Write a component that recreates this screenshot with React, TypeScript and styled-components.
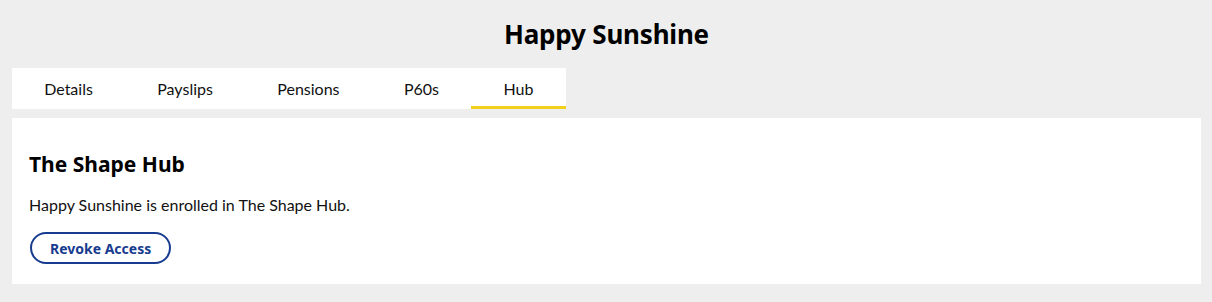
import React, { useState } from 'react';
import styled, { createGlobalStyle } from 'styled-components';

const GlobalStyle = createGlobalStyle`
  html, body {
    margin: 0;
    padding: 0;
    background: #eeeeee;
    font-family: Lato, "Liberation Sans", sans-serif;
    color: #111;
  }
`;

const Page = styled.div`
  padding: 0 11px 18px 12px;
`;

const Title = styled.h1`
  margin: 0;
  padding-top: 16px;
  height: 68px;
  box-sizing: border-box;
  text-align: center;
  font-family: "Noto Sans", "Open Sans", sans-serif;
  font-weight: 700;
  font-size: 26px;
  line-height: 36px;
  letter-spacing: -0.2px;
  color: #000;
`;

const TabBar = styled.nav`
  display: inline-flex;
  background: #fff;
  height: 41px;
  vertical-align: top;
`;

const Tab = styled.button<{ $active?: boolean }>`
  border: none;
  background: none;
  padding: 3px 32.2px 0;
  font-family: Lato, "Liberation Sans", sans-serif;
  font-size: 16px;
  color: #111;
  cursor: pointer;
  border-bottom: 3px solid ${(p) => (p.$active ? '#f2cf1c' : 'transparent')};
`;

const Card = styled.section`
  margin-top: 9px;
  background: #fff;
  padding: 20px 17px 17px;
  height: 166px;
  box-sizing: border-box;
`;

const CardTitle = styled.h2`
  margin: 0;
  font-family: "Noto Sans", "Open Sans", sans-serif;
  font-weight: 700;
  font-size: 21px;
  line-height: 52px;
  color: #000;
  height: 54px;
`;

const Text = styled.p`
  margin: 0;
  font-size: 16px;
  line-height: 26px;
  color: #111;
`;

const OutlineButton = styled.button`
  margin-top: 14px;
  margin-left: 1px;
  height: 32px;
  padding: 0 18px;
  border: 2px solid #173b8f;
  border-radius: 16px;
  background: #fff;
  color: #173b8f;
  font-family: "Noto Sans", "Open Sans", sans-serif;
  font-weight: 700;
  font-size: 14px;
  cursor: pointer;
`;

const tabs = ['Details', 'Payslips', 'Pensions', 'P60s', 'Hub'];

export default function App() {
  const [active, setActive] = useState('Hub');
  return (
    <Page>
      <GlobalStyle />
      <Title>Happy Sunshine</Title>
      <TabBar>
        {tabs.map((t) => (
          <Tab key={t} $active={t === active} onClick={() => setActive(t)}>
            {t}
          </Tab>
        ))}
      </TabBar>
      <Card>
        <CardTitle>The Shape Hub</CardTitle>
        <Text>Happy Sunshine is enrolled in The Shape Hub.</Text>
        <OutlineButton>Revoke Access</OutlineButton>
      </Card>
    </Page>
  );
}
